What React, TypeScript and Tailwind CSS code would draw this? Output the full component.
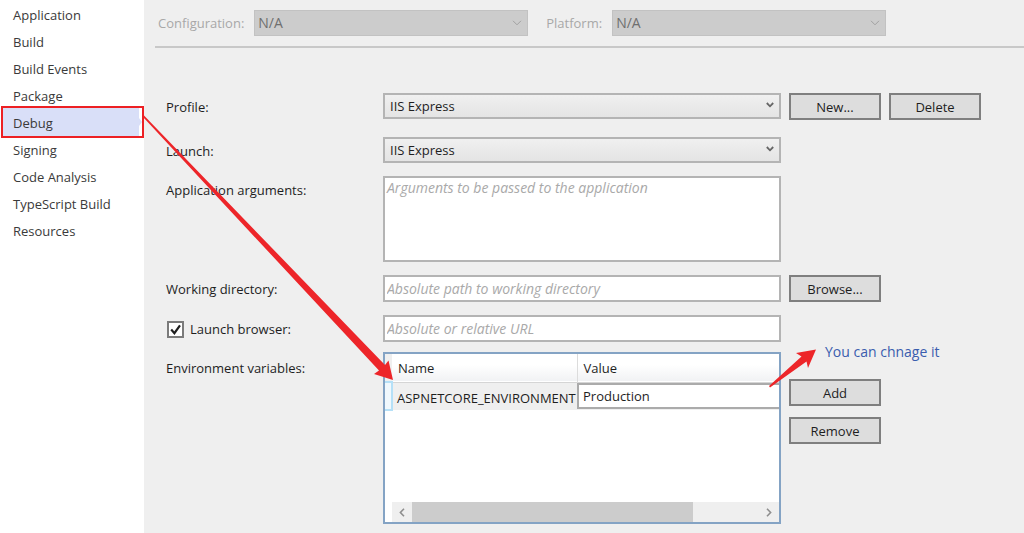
import type { ReactNode } from 'react';

const pages = [
  'Application',
  'Build',
  'Build Events',
  'Package',
  'Debug',
  'Signing',
  'Code Analysis',
  'TypeScript Build',
  'Resources',
];

const Chevron = ({ className = '' }: { className?: string }) => (
  <svg viewBox="0 0 10 6" fill="none" stroke="currentColor" className={`pointer-events-none absolute h-[6px] w-[10px] ${className}`}>
    <path d="M1 0.8 L5 4.8 L9 0.8" />
  </svg>
);

/* --- Disabled drop-down of the top bar --- */
const TopSelect = ({ id, label }: { id: string; label: string }) => (
  <>
    <label htmlFor={id} className="mr-[10px] text-[#a8a8a8]">{label}</label>
    <div className="relative min-w-0 flex-1">
      <select
        id={id}
        disabled
        className="block h-[26px] w-full appearance-none border border-[#c2c2c2] bg-[#cccccc] px-[3px] text-[14px] text-[#6f6f6f] opacity-100"
      >
        <option>N/A</option>
      </select>
      <Chevron className="right-[6px] top-[10px] text-[#a0a0a0]" />
    </div>
  </>
);

const ExpressSelect = ({ id }: { id: string }) => (
  <div className="relative">
    <select
      id={id}
      className="block h-[26px] w-full appearance-none border-2 border-[#b4b4b4] bg-linear-to-b from-[#f0f0f0] to-[#e4e4e4] px-[5px]"
    >
      <option>IIS Express</option>
    </select>
    <svg
      viewBox="0 0 8 6"
      fill="none"
      stroke="#666666"
      strokeWidth="1.8"
      className="pointer-events-none absolute right-[7px] top-[9px] h-[6px] w-[8px]"
    >
      <path d="M0.8 1 L4 4.3 L7.2 1" />
    </svg>
  </div>
);

const Button = ({ children }: { children: ReactNode }) => (
  <button type="button" className="h-[27px] w-[92px] border-2 border-[#7f7f7f] bg-[#dddddd]">
    {children}
  </button>
);

/* --- One line of the form: label, field, buttons --- */
const Row = ({ label, side, children }: { label: ReactNode; side?: ReactNode; children: ReactNode }) => (
  <div className="grid grid-cols-[209px_minmax(0,1fr)_192px] gap-x-2">
    <div className="pt-1">{label}</div>
    {children}
    <div>{side}</div>
  </div>
);

const inputStyle =
  'block w-full border-2 border-[#b4b4b4] bg-white px-[2px] text-[14px] placeholder:italic placeholder:text-[#a9a9a9] placeholder:opacity-100';

const App = () => (
  <div className="relative flex min-h-screen bg-[#efefef] font-['Open_Sans','Noto_Sans',sans-serif] text-[13px] leading-5 text-[#1e1e1e]">
    {/* --- Sidebar --- */}
    <nav className="w-36 shrink-0 bg-white pt-px text-[#3a3a3a]">
      {pages.map((page) => (
        <a key={page} href="#" className="relative flex h-[27px] items-center pl-[13px]">
          {page === 'Debug' && (
            <>
              <span className="absolute -top-px bottom-0 left-[3px] right-[5px] bg-[#d9dff8]" />
              <svg viewBox="0 0 3 8" className="absolute right-[2px] top-[9px] h-2 w-[3px]" fill="#d9dff8">
                <path d="M0 0 L3 4 L0 8 Z" />
              </svg>
              <span className="absolute -top-[3px] bottom-[-2px] left-px right-0 border-2 border-[#ed2024]" />
            </>
          )}
          <span className="relative">{page}</span>
        </a>
      ))}
    </nav>

    <main className="min-w-0 flex-1 pb-[9px]">
      {/* --- Top bar --- */}
      <div className="ml-[11px] border-b-2 border-[#c8c8c8] pb-[10px] pl-[3px] pr-[138px] pt-[10px]">
        <div className="flex items-center">
          <TopSelect id="configuration" label="Configuration:" />
          <div className="w-[18px]" />
          <TopSelect id="platform" label="Platform:" />
        </div>
      </div>

      <form className="pl-[22px] pr-[43px] pt-[45px]">
        <div className="flex flex-col gap-[13px]">
          <div className="flex flex-col gap-[17px]">
            <Row
              label={<label htmlFor="profile">Profile:</label>}
              side={
                <div className="flex gap-2">
                  <Button>New...</Button>
                  <Button>Delete</Button>
                </div>
              }
            >
              <ExpressSelect id="profile" />
            </Row>
            <Row label={<label htmlFor="launch">Launch:</label>}>
              <ExpressSelect id="launch" />
            </Row>
          </div>
          <Row label={<label htmlFor="arguments">Application arguments:</label>}>
            <textarea
              id="arguments"
              placeholder="Arguments to be passed to the application"
              className={`${inputStyle} h-[86px] resize-none`}
            />
          </Row>
          <Row
            label={<label htmlFor="directory">Working directory:</label>}
            side={<Button>Browse...</Button>}
          >
            <input id="directory" type="text" placeholder="Absolute path to working directory" className={`${inputStyle} h-[27px]`} />
          </Row>
          <Row
            label={
              <div className="flex items-center gap-[6px] pl-px">
                <span className="relative flex">
                  <input
                    id="browser"
                    type="checkbox"
                    defaultChecked
                    className="peer size-[17px] appearance-none border-2 border-[#7b7b7b] bg-white"
                  />
                  <svg viewBox="0 0 17 17" className="pointer-events-none absolute inset-0 hidden peer-checked:block">
                    <path d="M4.2 8.6 L7.4 12.2 L13 4.4" fill="none" stroke="#1e1e1e" strokeWidth="2.2" />
                  </svg>
                </span>
                <label htmlFor="browser">Launch browser:</label>
              </div>
            }
          >
            <input type="text" aria-label="Launch URL" placeholder="Absolute or relative URL" className={`${inputStyle} h-[27px]`} />
          </Row>
        </div>

        <div className="mt-[10px]">
          <Row
            label={<span className="block pt-[2px]">Environment variables:</span>}
            side={
              <div className="flex flex-col items-start gap-[11px] pt-[27px]">
                <Button>Add</Button>
                <Button>Remove</Button>
              </div>
            }
          >
            {/* --- Variables grid --- */}
            <div className="flex h-[172px] flex-col justify-between border-2 border-[#84a3c4] bg-white">
              <table className="w-full table-fixed border-collapse text-left">
                <thead>
                  <tr className="h-7 border-b border-[#d5d5d5] bg-linear-to-b from-white from-40% to-[#f1f2f4]">
                    <th className="w-[7px] bg-[#efefef]" />
                    <th className="w-[185px] border-r border-[#dcdcdc] pl-[6px] font-normal">Name</th>
                    <th className="pl-[6px] font-normal">Value</th>
                  </tr>
                </thead>
                <tbody>
                  <tr className="h-7 bg-[#efefef]">
                    <td className="border-2 border-l-0 border-[#b5e0f7] bg-[#f0f8fd]" />
                    <td className="pl-1 pt-1">ASPNETCORE_ENVIRONMENT</td>
                    <td className="p-0 align-top">
                      <input
                        type="text"
                        aria-label="Value"
                        defaultValue="Production"
                        className="block h-[26px] w-full border-2 border-r-0 border-[#ababab] bg-white px-1"
                      />
                    </td>
                  </tr>
                </tbody>
              </table>
              <div className="ml-[7px] flex h-5 bg-[#efefef]">
                <button type="button" aria-label="Scroll left" className="flex w-5 items-center justify-center text-[#8f8f8f]">
                  <svg viewBox="0 0 6 9" className="h-[9px] w-[6px]" fill="none" stroke="currentColor" strokeWidth="1.6">
                    <path d="M5 0.8 L1.4 4.5 L5 8.2" />
                  </svg>
                </button>
                <div className="flex-1">
                  <div className="h-full w-[81%] bg-[#cccccc]" />
                </div>
                <button type="button" aria-label="Scroll right" className="flex w-5 items-center justify-center text-[#8f8f8f]">
                  <svg viewBox="0 0 6 9" className="h-[9px] w-[6px]" fill="none" stroke="currentColor" strokeWidth="1.6">
                    <path d="M1 0.8 L4.6 4.5 L1 8.2" />
                  </svg>
                </button>
              </div>
            </div>
          </Row>
        </div>
      </form>
    </main>

    {/* --- Annotations over the page --- */}
    <svg width="1024" height="533" viewBox="0 0 1024 533" fill="#ed2529" className="pointer-events-none absolute left-0 top-0">
      <path d="M144 115.5 L385 365 L388.5 360.5 L393 380 L374 374 L379 370.5 L143 117 Z" />
      <path d="M769 386 L801.5 356.5 L796 353 L816 349.5 L808 368 L806.5 361.5 L770 387.5 Z" />
    </svg>
    <p className="absolute left-[825px] top-[342px] text-[14px] text-[#3a5dae]">You can chnage it</p>
  </div>
);

export default App;
